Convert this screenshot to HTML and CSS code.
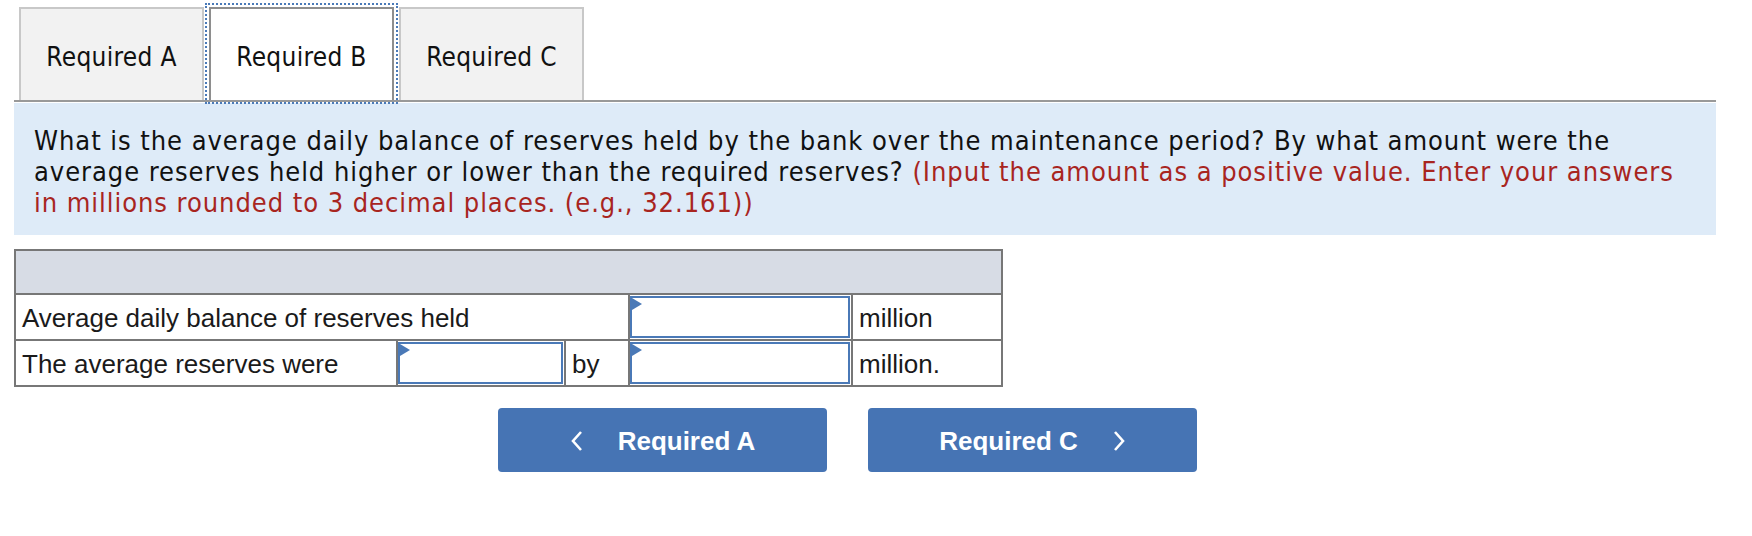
FILE: index.html
```html
<!DOCTYPE html>
<html>
<head>
<meta charset="utf-8">
<link rel="stylesheet" href="styles.css">
</head>
<body>
<div class="page">
  <div class="tabs">
    <div class="tab">Required A</div>
    <div class="tab active">Required B</div>
    <div class="tab">Required C</div>
  </div>
  <div class="question">
    What is the average daily balance of reserves held by the bank over the maintenance period? By what amount were the<br>
    average reserves held higher or lower than the required reserves? <span class="hint">(Input the amount as a positive value. Enter your answers<br>
    in millions rounded to 3 decimal places. (e.g., 32.161))</span>
  </div>
  <table class="grid">
    <colgroup>
      <col class="c1"><col class="c2"><col class="c3"><col class="c4"><col class="c5">
    </colgroup>
    <tr class="head"><td colspan="5"></td></tr>
    <tr>
      <td colspan="3" class="label">Average daily balance of reserves held</td>
      <td class="inp"><div class="answer"></div></td>
      <td class="label">million</td>
    </tr>
    <tr>
      <td class="label">The average reserves were</td>
      <td class="inp"><div class="answer"></div></td>
      <td class="label">by</td>
      <td class="inp"><div class="answer"></div></td>
      <td class="label">million.</td>
    </tr>
  </table>
  <div class="nav">
    <div class="btn">
      <svg class="chev" width="14" height="22" viewBox="0 0 14 22"><path d="M11 2 L3 11 L11 20" fill="none" stroke="#fff" stroke-width="2.6"/></svg>
      <span>Required A</span>
    </div>
    <div class="btn">
      <span>Required C</span>
      <svg class="chev" width="14" height="22" viewBox="0 0 14 22"><path d="M3 2 L11 11 L3 20" fill="none" stroke="#fff" stroke-width="2.6"/></svg>
    </div>
  </div>
</div>
</body>
</html>
```
FILE: styles.css
```css
html, body {
  margin: 0;
  padding: 0;
  background: #fff;
}
.page {
  padding: 7px 36px 0 14px;
}
.tabs {
  display: flex;
  gap: 5px;
  padding-left: 5px;
  border-bottom: 2px solid #999;
}
.tab {
  box-sizing: border-box;
  width: 185px;
  height: 93px;
  padding-top: 4px;
  display: flex;
  align-items: center;
  justify-content: center;
  font-family: "DejaVu Sans Condensed", "DejaVu Sans", sans-serif;
  font-size: 26px;
  letter-spacing: 0.3px;
  color: #111;
  background: #f2f2f2;
  border: 2px solid #c8c8c8;
  border-bottom: none;
}
.tab.active {
  background: #fff;
  border-color: #8e8e8e;
  outline: 2px dotted #4a7ab8;
  outline-offset: 2px;
}
.question {
  margin-top: 1px;
  background: #deebf8;
  padding: 22px 10px 16px 20px;
  height: 94px;
  font-family: "DejaVu Sans Condensed", "DejaVu Sans", sans-serif;
  font-size: 27px;
  letter-spacing: 0.95px;
  line-height: 31px;
  color: #111;
  white-space: nowrap;
}
.hint {
  color: #a8251f;
}
.grid {
  margin-top: 14px;
  border-collapse: collapse;
  table-layout: fixed;
  width: 987px;
  border: 2px solid #777;
  font-family: "Liberation Sans", Arial, sans-serif;
  font-size: 26px;
  color: #1a1a1a;
}
.c1 { width: 382px; }
.c2 { width: 168px; }
.c3 { width: 64px; }
.c4 { width: 223px; }
.c5 { width: 150px; }
.grid td {
  border: 2px solid #777;
  height: 44px;
  padding: 3px 6px 0;
  box-sizing: border-box;
  white-space: nowrap;
}
.grid .head td {
  background: #d7dce5;
}
.grid td.inp {
  padding: 1px 1px 1px 0;
}
.answer {
  position: relative;
  box-sizing: border-box;
  height: 42px;
  border: 2px solid #4a79b7;
  background: #fff;
}
.answer::before {
  content: "";
  position: absolute;
  left: 0;
  top: 0;
  border-left: 10px solid #4a79b7;
  border-top: 6px solid transparent;
  border-bottom: 6px solid transparent;
}
.nav {
  display: flex;
  gap: 41px;
  margin-top: 21px;
  padding-left: 484px;
}
.btn {
  box-sizing: border-box;
  width: 329px;
  height: 64px;
  padding-top: 2px;
  border-radius: 4px;
  background: #4674b4;
  color: #fff;
  display: flex;
  align-items: center;
  justify-content: center;
  gap: 34px;
  font-family: "Liberation Sans", Arial, sans-serif;
  font-weight: bold;
  font-size: 26px;
}
.chev {
  display: block;
}
```
